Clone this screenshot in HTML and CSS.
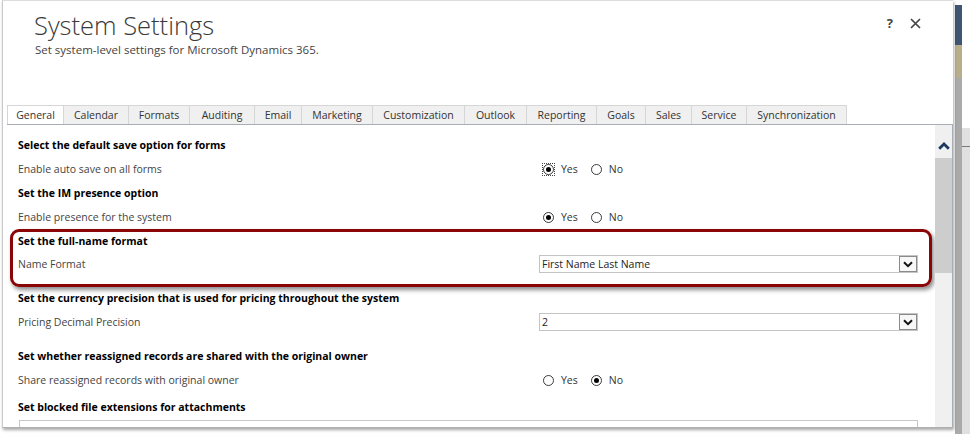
FILE: index.html
```html
<!DOCTYPE html>
<html lang="en">
<head>
<meta charset="utf-8">
<title>System Settings</title>
<link rel="stylesheet" href="styles.css">
</head>
<body>
<div class="screen">
  <div class="dialog">
    <header class="dlg-header">
      <div class="titles">
        <h1 class="title">System Settings</h1>
        <p class="subtitle">Set system-level settings for Microsoft Dynamics 365.</p>
      </div>
      <div class="actions">
        <span class="help">?</span>
        <svg class="close" width="11" height="11" viewBox="0 0 11 11"><path d="M1 1 L10 10 M10 1 L1 10" stroke="#444" stroke-width="1.7" fill="none"/></svg>
      </div>
    </header>
    <nav class="tabs">
      <span class="tab t-general active">General</span>
      <span class="tab t-calendar">Calendar</span>
      <span class="tab t-formats">Formats</span>
      <span class="tab t-auditing">Auditing</span>
      <span class="tab t-email">Email</span>
      <span class="tab t-marketing">Marketing</span>
      <span class="tab t-custom">Customization</span>
      <span class="tab t-outlook">Outlook</span>
      <span class="tab t-reporting">Reporting</span>
      <span class="tab t-goals">Goals</span>
      <span class="tab t-sales">Sales</span>
      <span class="tab t-service">Service</span>
      <span class="tab t-sync last">Synchronization</span>
    </nav>
    <div class="panel">
      <div class="form">
        <section class="sec s1">
          <div class="heading">Select the default save option for forms</div>
          <div class="field">
            <span class="label">Enable auto save on all forms</span>
            <span class="radios">
              <span class="rbox focus"><span class="radio checked"></span></span><span class="rlabel">Yes</span>
              <span class="rbox next"><span class="radio"></span></span><span class="rlabel">No</span>
            </span>
          </div>
        </section>
        <section class="sec s2">
          <div class="heading">Set the IM presence option</div>
          <div class="field">
            <span class="label">Enable presence for the system</span>
            <span class="radios">
              <span class="rbox"><span class="radio checked"></span></span><span class="rlabel">Yes</span>
              <span class="rbox next"><span class="radio"></span></span><span class="rlabel">No</span>
            </span>
          </div>
        </section>
        <section class="sec s3 highlight">
          <div class="heading">Set the full-name format</div>
          <div class="field">
            <span class="label">Name Format</span>
            <span class="select">
              <span class="val">First Name Last Name</span>
              <span class="dd"><svg width="10" height="7" viewBox="0 0 10 7"><path d="M1 1.2 L5 5.2 L9 1.2" stroke="#111" stroke-width="2" fill="none"/></svg></span>
            </span>
          </div>
        </section>
        <section class="sec s4">
          <div class="heading">Set the currency precision that is used for pricing throughout the system</div>
          <div class="field">
            <span class="label">Pricing Decimal Precision</span>
            <span class="select">
              <span class="val">2</span>
              <span class="dd"><svg width="10" height="7" viewBox="0 0 10 7"><path d="M1 1.2 L5 5.2 L9 1.2" stroke="#111" stroke-width="2" fill="none"/></svg></span>
            </span>
          </div>
        </section>
        <section class="sec s5">
          <div class="heading">Set whether reassigned records are shared with the original owner</div>
          <div class="field">
            <span class="label">Share reassigned records with original owner</span>
            <span class="radios">
              <span class="rbox"><span class="radio"></span></span><span class="rlabel">Yes</span>
              <span class="rbox next"><span class="radio checked"></span></span><span class="rlabel">No</span>
            </span>
          </div>
        </section>
        <section class="sec s6">
          <div class="heading">Set blocked file extensions for attachments</div>
          <div class="textarea"></div>
        </section>
      </div>
      <div class="scrollbar">
        <div class="sb-up"><svg width="12" height="8" viewBox="0 0 12 8"><path d="M1.2 6.8 L6 2 L10.8 6.8" stroke="#1d3a5f" stroke-width="2.8" fill="none"/></svg></div>
        <div class="sb-thumb"></div>
        <div class="sb-track"></div>
      </div>
    </div>
  </div>
  <div class="backdrop">
    <div class="stripe"></div>
    <div class="rest"></div>
  </div>
</div>
</body>
</html>
```
FILE: styles.css
```css
* { box-sizing: border-box; }
html, body { margin: 0; padding: 0; }
body {
  width: 970px;
  height: 434px;
  overflow: hidden;
  background: #fff;
  font-family: "Open Sans", "Noto Sans", sans-serif;
  color: #222;
}
.screen {
  display: flex;
  width: 970px;
  height: 434px;
}
.dialog {
  position: relative;
  z-index: 1;
  margin-left: 2px;
  width: 951px;
  height: 428px;
  flex: none;
  display: flex;
  flex-direction: column;
  background: #fff;
  border-left: 1px solid #c9c9c9;
  border-top: 1px solid #dcdcdc;
  border-bottom: 1px solid #b0b0b0;
  box-shadow: 1px 2px 3px rgba(0, 0, 0, 0.35);
}
.dlg-header {
  height: 104px;
  flex: none;
  display: flex;
  justify-content: space-between;
  align-items: flex-start;
  padding: 9px 32px 0 31px;
}
.title {
  margin: 0;
  font-weight: 300;
  font-size: 25.5px;
  line-height: 30px;
  color: #3a3a3a;
}
.subtitle {
  margin: 2px 0 0 1px;
  font-size: 11.5px;
  line-height: 16px;
  color: #444;
}
.actions {
  display: flex;
  align-items: center;
  gap: 17px;
  margin-top: 7px;
  height: 12px;
}
.help {
  font-weight: 700;
  font-size: 13px;
  line-height: 12px;
  color: #444;
}
.close { display: block; }
.tabs {
  display: flex;
  flex: none;
  margin-left: 4px;
  height: 19px;
}
.tab {
  display: block;
  flex: none;
  text-align: center;
  font-size: 10.5px;
  line-height: 18px;
  color: #333;
  background: #f0f0f0;
  border-top: 1px solid #d6d6d6;
  border-left: 1px solid #d6d6d6;
  white-space: nowrap;
}
.tab.active { background: #fff; }
.tab.last { border-right: 1px solid #d6d6d6; }
.t-general { width: 56px; }
.t-calendar { width: 65px; }
.t-formats { width: 61px; }
.t-auditing { width: 65px; }
.t-email { width: 47px; }
.t-marketing { width: 71px; }
.t-custom { width: 92px; }
.t-outlook { width: 62px; }
.t-reporting { width: 70px; }
.t-goals { width: 49px; }
.t-sales { width: 46px; }
.t-service { width: 55px; }
.t-sync { width: 101px; }
.panel {
  flex: 1;
  min-height: 0;
  display: flex;
  margin-left: 4px;
  border-top: 1px solid #a9aeb6;
  border-right: 1px solid #a9aeb6;
}
.form {
  flex: 1;
  min-width: 0;
  overflow: hidden;
  padding: 8px 0 0 11px;
  font-size: 10.5px;
}
.heading {
  font-weight: 700;
  line-height: 24px;
  color: #000;
  white-space: nowrap;
}
.field {
  display: grid;
  grid-template-columns: 521px 379px;
  align-items: center;
  height: 24px;
}
.label {
  color: #444;
  line-height: 24px;
  white-space: nowrap;
}
.radios {
  display: flex;
  align-items: center;
  padding-left: 3px;
  color: #333;
}
.rbox {
  display: flex;
  flex: none;
  border: 1px solid transparent;
}
.rbox.focus { border: 1px dotted #444; }
.rbox.next { margin-left: 12px; }
.radio {
  width: 11px;
  height: 11px;
  border: 1px solid #3a3a3a;
  border-radius: 50%;
  display: grid;
  place-items: center;
  flex: none;
  background: #fff;
}
.radio.checked::after {
  content: "";
  width: 5px;
  height: 5px;
  border-radius: 50%;
  background: #000;
}
.rlabel {
  margin-left: 6px;
  line-height: 14px;
}
.select {
  display: flex;
  align-items: center;
  height: 18px;
  border: 1px solid #c4c4c4;
  background: #fff;
}
.select .val {
  flex: 1;
  padding-left: 2px;
  color: #222;
  line-height: 16px;
}
.select .dd {
  width: 18px;
  height: 16px;
  border: 1px solid #8a8a8a;
  background: #f7f7f7;
  display: flex;
  align-items: center;
  justify-content: center;
}
.select .dd svg { display: block; }
.highlight {
  margin: 0 3px 0 -8px;
  border: 3px solid #8a0505;
  border-radius: 9px;
  padding: 0 0 8px 5px;
  box-shadow: 2px 3px 4px rgba(0, 0, 0, 0.45);
}
.highlight .heading { line-height: 18px; }
.highlight .field { margin-top: 2px; }
.s4 { margin-top: -1px; }
.s5 { margin-top: 10px; }
.s6 { margin-top: 3px; }
.textarea {
  margin-top: 1px;
  margin-left: 1px;
  width: 899px;
  height: 24px;
  border: 1px solid #c8c8c8;
}
.scrollbar {
  width: 17px;
  flex: none;
  display: flex;
  flex-direction: column;
  background: #f0f0f0;
}
.sb-up {
  height: 33px;
  flex: none;
  display: flex;
  justify-content: center;
  padding-top: 17px;
}
.sb-up svg { display: block; }
.sb-thumb {
  height: 115px;
  flex: none;
  background: #cdcdcd;
}
.sb-track { flex: 1; }
.backdrop {
  flex: 1;
  display: flex;
  height: 434px;
}
.stripe {
  margin-left: 2px;
  margin-top: 5px;
  width: 7px;
  height: 429px;
  background: linear-gradient(to bottom, #3d5672 0 40px, #b8af8a 40px 73px, #aaaaaa 73px 100%);
}
.rest {
  flex: 1;
  background: linear-gradient(to bottom, #fff 0 128px, #e0e0e0 128px 146px, #7a7a7a 146px 147px, #e0e0e0 147px 100%);
}
```
